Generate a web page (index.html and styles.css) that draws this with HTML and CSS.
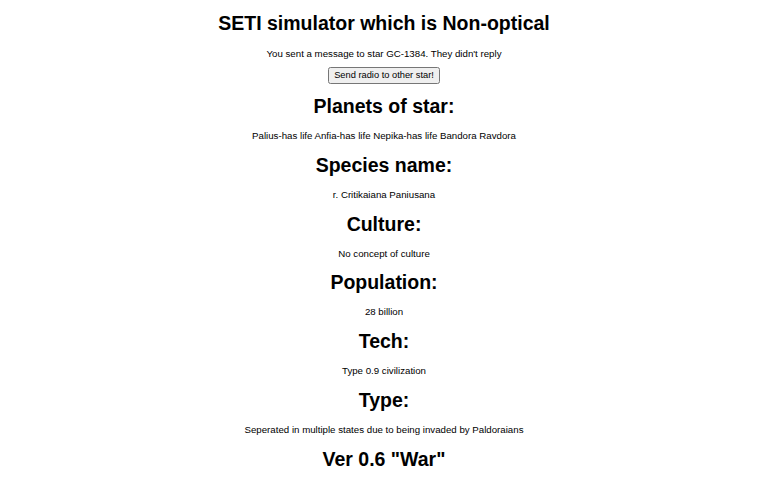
FILE: index.html
```html
<!DOCTYPE html>
<html>
<head>
<meta charset="utf-8">
<link rel="stylesheet" href="styles.css">
</head>
<body>
<main class="page">
  <h1 class="heading">SETI simulator which is Non-optical</h1>
  <p class="text intro">You sent a message to star GC-1384. They didn't reply</p>
  <button class="btn">Send radio to other star!</button>
  <h2 class="heading">Planets of star:</h2>
  <p class="text">Palius-has life Anfia-has life Nepika-has life Bandora Ravdora</p>
  <h2 class="heading">Species name:</h2>
  <p class="text">r. Critikaiana Paniusana</p>
  <h2 class="heading">Culture:</h2>
  <p class="text">No concept of culture</p>
  <h2 class="heading">Population:</h2>
  <p class="text">28 billion</p>
  <h2 class="heading">Tech:</h2>
  <p class="text">Type 0.9 civilization</p>
  <h2 class="heading">Type:</h2>
  <p class="text">Seperated in multiple states due to being invaded by Paldoraians</p>
  <h2 class="heading">Ver 0.6 "War"</h2>
</main>
</body>
</html>
```
FILE: styles.css
```css
html, body {
  margin: 0;
  padding: 0;
  background: #fff;
}
.page {
  display: flex;
  flex-direction: column;
  align-items: center;
  padding-top: 12px;
  font-family: "Liberation Sans", Arial, sans-serif;
  color: #000;
  text-align: center;
}
.heading {
  font-size: 19.5px;
  line-height: 22px;
  font-weight: bold;
  margin: 0;
}
.text {
  font-size: 9.7px;
  line-height: 12px;
  margin: 13px 0 11.8px;
}
.intro {
  margin-top: 14px;
  margin-bottom: 7px;
}
.btn {
  font-family: "Liberation Sans", Arial, sans-serif;
  font-size: 9.3px;
  line-height: 11px;
  padding: 1px 4px;
  margin: 0 0 11px;
}
```
